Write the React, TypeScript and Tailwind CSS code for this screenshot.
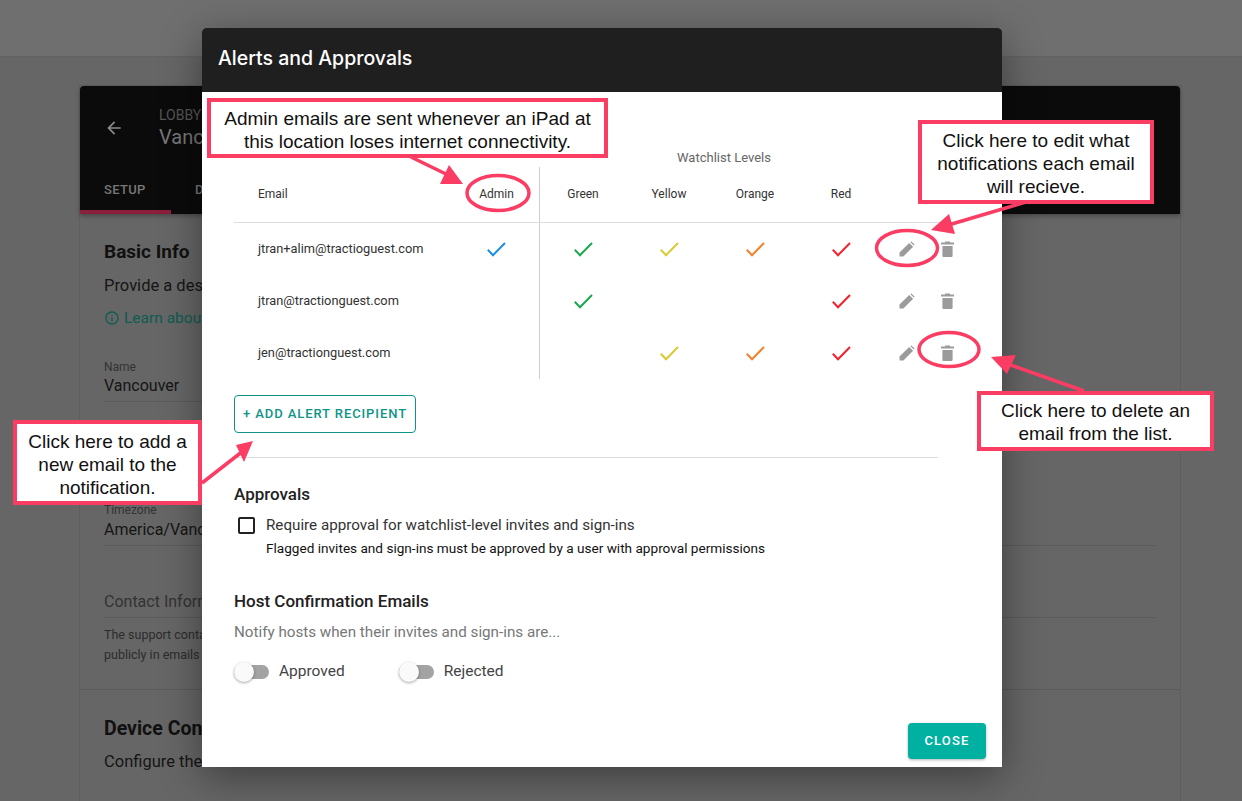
import { MdArrowBack, MdInfoOutline } from 'react-icons/md';

const LEVELS = [
  { label: 'Admin', color: '#1a8fe3' },
  { label: 'Green', color: '#1aa84f' },
  { label: 'Yellow', color: '#d8cb35' },
  { label: 'Orange', color: '#f5822a' },
  { label: 'Red', color: '#f5222d' },
];

const ROWS = [
  { email: 'jtran+alim@tractioguest.com', on: [true, true, true, true, true] },
  { email: 'jtran@tractionguest.com', on: [false, true, false, false, true] },
  { email: 'jen@tractionguest.com', on: [false, false, true, true, true] },
];

const GRID = 'grid grid-cols-[220px_86px_86px_86px_86px_86px_46px_34px] w-[730px]';

function Tick({ color }: { color: string }) {
  return (
    <svg width="19" height="15" viewBox="0 0 19 15" fill="none">
      <polyline points="0.8,7.8 6,13.2 18,1" stroke={color} strokeWidth="2" />
    </svg>
  );
}

function Pencil() {
  return (
    <svg width="16" height="16" viewBox="0 0 16 16" fill="#9b9b9b">
      <path d="M0.5 15.5V11.6L10.2 1.9 14.1 5.8 4.4 15.5Z" />
      <path d="M12.4 0.4 15.6 3.6 14.8 4.6 11.4 1.3Z" />
    </svg>
  );
}

function Trash() {
  return (
    <svg width="13" height="16" viewBox="0 0 13 16" fill="#9b9b9b">
      <path d="M4 0.5H9V1.6H13V3.6H0V1.6H4Z" />
      <path d="M1.4 5H11.6V14.4C11.6 15.3 11 16 10.1 16H2.9C2 16 1.4 15.3 1.4 14.4Z" />
    </svg>
  );
}

function Toggle({ label }: { label: string }) {
  return (
    <div className="flex items-center">
      <div className="relative w-[35px] h-[14px] rounded-full bg-[#a3a3a3]">
        <div className="absolute left-0 top-[-3px] w-5 h-5 rounded-full bg-[#fafafa] shadow-[0_1px_3px_rgba(0,0,0,0.35)]" />
      </div>
      <span className="ml-[10px] text-[15.5px] text-[#444]">{label}</span>
    </div>
  );
}

function Callout({ className, children }: { className: string; children: React.ReactNode }) {
  return (
    <div className={`absolute flex items-center justify-center bg-white border-4 border-[#fb3c63] text-center text-[19px] leading-[23px] text-[#111] font-['Liberation_Sans',sans-serif] ${className}`}>
      <div>{children}</div>
    </div>
  );
}

function BackgroundPage() {
  return (
    <div className="h-full bg-[#666] text-[#0f0f0f]">
      <div className="h-[57px] bg-[#6f6f6f] border-b border-[#626262]" />
      <div className="ml-20 mt-[29px] w-[1100px] bg-[#666] shadow-[0_0_0_1px_#5e5e5e]">
        <div className="h-[128px] bg-[#0b0b0b] rounded-t-sm flex flex-col justify-between shadow-[0_2px_4px_rgba(0,0,0,0.3)]">
          <div className="flex items-center pl-6 pt-[20px]">
            <MdArrowBack className="text-[#8a8a8a]" size={20} />
            <div className="ml-[35px]">
              <div className="text-[14px] leading-[18px] text-[#555]">LOBBY</div>
              <div className="text-[20px] leading-[26px] text-[#777]">Vancouver</div>
            </div>
          </div>
          <div className="flex text-[13px] font-medium tracking-wide text-[#777]">
            <div className="w-[91px] h-[44px] pt-[10px] pl-6 border-b-4 border-[#8a1f3c]">SETUP</div>
            <div className="pt-[10px] pl-6">DEVICES</div>
          </div>
        </div>
        <div className="px-6 pt-[27px] pb-[24px] border-b border-[#5a5a5a]">
          <h3 className="text-[19px] leading-[22px] font-bold text-[#111]">Basic Info</h3>
          <p className="mt-[12px] text-[16.5px] leading-[22px] text-[#151515]">Provide a description</p>
          <p className="mt-[10px] flex items-center gap-1 text-[15.5px] leading-[22px] text-[#0e5c52]">
            <MdInfoOutline size={16} /> Learn about
          </p>
          <div className="mt-[30px] text-[12px] leading-[16px] text-[#333]">Name</div>
          <div className="text-[16px] leading-[22px] pb-[4px] border-b border-[#5a5a5a] text-[#151515]">Vancouver</div>
          <div className="mt-[100px] text-[12px] leading-[16px] text-[#333]">Timezone</div>
          <div className="text-[16px] leading-[22px] pt-[1px] pb-[4px] border-b border-[#5a5a5a] text-[#151515]">America/Vancouver</div>
          <div className="mt-[45px] text-[16px] leading-[22px] pb-[4px] border-b border-[#5a5a5a] text-[#333]">Contact Information</div>
          <p className="mt-[7px] text-[12.5px] leading-[20px] text-[#2c2c2c]">The support contact<br />publicly in emails</p>
        </div>
        <div className="px-6 pt-[28px] h-[200px]">
          <h3 className="text-[19.5px] leading-[22px] font-bold text-[#111]">Device Config</h3>
          <p className="mt-[11px] text-[16.5px] leading-[22px] text-[#151515]">Configure the</p>
        </div>
      </div>
    </div>
  );
}

function AlertsModal() {
  return (
    <div className="absolute left-[202px] top-[28px] w-[800px] h-[739px] bg-white rounded-t-sm flex flex-col shadow-[0_10px_40px_rgba(0,0,0,0.4)] font-['Roboto',sans-serif]">
      <div className="h-16 shrink-0 bg-[#1f1f1f] rounded-t-sm flex items-center px-4 pb-[3px] text-white text-[19.5px] font-medium font-['Inter',sans-serif]">
        Alerts and Approvals
      </div>
      <div className="flex-1 flex flex-col px-8">
        {/* table */}
        <div className="mt-[57px] ml-[306px] w-[368px] text-center text-[13px] leading-[18px] text-[#666]">Watchlist Levels</div>
        <div className={`${GRID} h-[56px] items-center border-b border-[#ddd] text-[12px] text-[#333] w-[704px]`}>
          <div className="pl-6 pb-[2px]">Email</div>
          {LEVELS.map((l) => (
            <div key={l.label} className={`text-center h-full pb-[2px] flex items-center justify-center ${l.label === 'Admin' ? 'border-r border-[#ccc]' : ''}`}>
              {l.label}
            </div>
          ))}
        </div>
        {ROWS.map((row) => (
          <div key={row.email} className={`${GRID} h-[52px] items-center text-[12.8px] text-[#333]`}>
            <div className="pl-6">{row.email}</div>
            {row.on.map((on, i) => (
              <div key={i} className={`h-full flex items-center justify-center ${i === 0 ? 'border-r border-[#ccc]' : ''}`}>
                {on && <Tick color={LEVELS[i].color} />}
              </div>
            ))}
            <div className="flex justify-center"><Pencil /></div>
            <div className="flex justify-center"><Trash /></div>
          </div>
        ))}

        <button className="mt-[16px] w-[182px] h-[38px] rounded-sm border border-[#0d9488] text-[#0d9488] text-[13px] font-medium tracking-[0.07em]">
          + ADD ALERT RECIPIENT
        </button>
        <div className="mt-[24px] border-t border-[#ddd] w-[704px]" />

        <h4 className="mt-[26px] text-[17px] leading-[20px] font-medium text-[#222]">Approvals</h4>
        <div className="mt-[11px] flex">
          <div className="ml-1 mt-[2px] w-[17px] h-[17px] rounded-[2px] border-2 border-[#222]" />
          <div className="ml-[11px]">
            <div className="text-[15.2px] leading-[20px] text-[#333]">Require approval for watchlist-level invites and sign-ins</div>
            <div className="mt-[5px] text-[13.6px] leading-[16px] text-[#111]">Flagged invites and sign-ins must be approved by a user with approval permissions</div>
          </div>
        </div>

        <h4 className="mt-[35px] text-[17px] leading-[20px] font-medium text-[#222]">Host Confirmation Emails</h4>
        <p className="mt-[11px] text-[15.2px] leading-[20px] text-[#777]">Notify hosts when their invites and sign-ins are...</p>
        <div className="mt-[18px] flex gap-[54px]">
          <Toggle label="Approved" />
          <Toggle label="Rejected" />
        </div>
      </div>
      <div className="flex justify-end px-4 pb-2">
        <button className="w-[78px] h-9 rounded-sm bg-[#00b0a0] text-white text-[13px] font-medium tracking-[0.09em] shadow-[0_1px_3px_rgba(0,0,0,0.3)]">
          CLOSE
        </button>
      </div>
    </div>
  );
}

function Annotations() {
  const pink = '#fb3c63';
  return (
    <>
      <svg className="absolute inset-0" width="1242" height="801" viewBox="0 0 1242 801" fill="none">
        <ellipse cx="498" cy="193" rx="31" ry="17.5" stroke={pink} strokeWidth="3.5" />
        <ellipse cx="907" cy="248" rx="30.5" ry="17.5" stroke={pink} strokeWidth="3.5" />
        <ellipse cx="949" cy="349.5" rx="30" ry="17" stroke={pink} strokeWidth="3.5" />
        <line x1="411" y1="157" x2="450" y2="176" stroke={pink} strokeWidth="3.5" />
        <polygon points="463,184 440,184 449,165" fill={pink} />
        <line x1="1033" y1="200" x2="945" y2="226" stroke={pink} strokeWidth="3.5" />
        <polygon points="931,230 949,214 955,234" fill={pink} />
        <line x1="1084" y1="391" x2="1005" y2="363" stroke={pink} strokeWidth="3.5" />
        <polygon points="991,357 1016,355 1007,374" fill={pink} />
        <line x1="202" y1="483" x2="243" y2="451" stroke={pink} strokeWidth="3.5" />
        <polygon points="253,441 236,445 244,462" fill={pink} />
      </svg>
      <Callout className="left-[207px] top-[98px] w-[401px] h-[60px] pt-[3px]">
        Admin emails are sent whenever an iPad at<br />this location loses internet connectivity.
      </Callout>
      <Callout className="left-[918px] top-[120px] w-[236px] h-[84px] pt-[2px]">
        Click here to edit what<br />notifications each email<br />will recieve.
      </Callout>
      <Callout className="left-[977px] top-[391px] w-[237px] h-[60px] pt-[2px]">
        Click here to delete an<br />email from the list.
      </Callout>
      <Callout className="left-[13px] top-[420px] w-[189px] h-[85px] pt-[3px]">
        Click here to add a<br />new email to the<br />notification.
      </Callout>
    </>
  );
}

export default function App() {
  return (
    <div className="relative w-[1242px] h-[801px] overflow-hidden font-['Roboto',sans-serif]">
      <BackgroundPage />
      <AlertsModal />
      <Annotations />
    </div>
  );
}
